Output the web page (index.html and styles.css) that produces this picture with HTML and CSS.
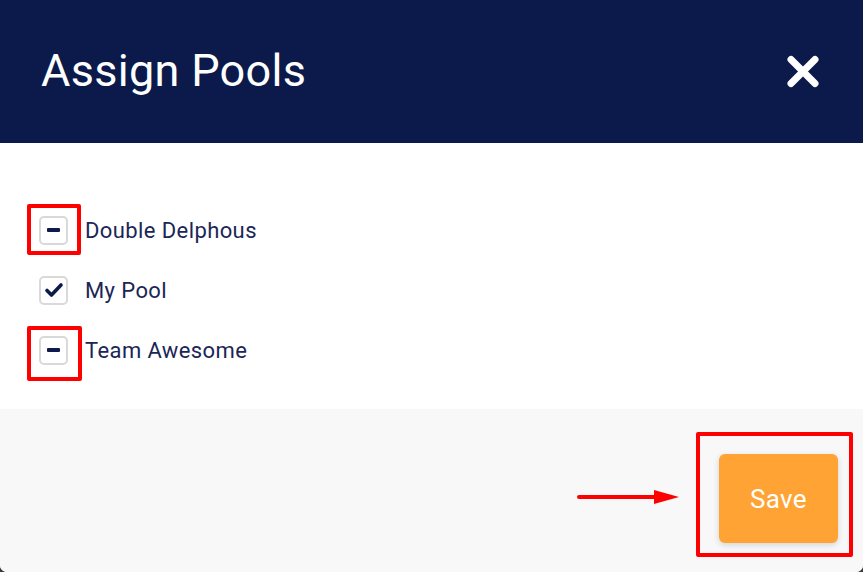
FILE: index.html
```html
<!DOCTYPE html>
<html>
<head>
<meta charset="utf-8">
<link rel="stylesheet" href="styles.css">
</head>
<body>
<div class="modal">
  <header class="modal-header">
    <h1 class="title">Assign Pools</h1>
    <button class="close" aria-label="Close">
      <svg width="34" height="33" viewBox="0 0 34 33"><path d="M5 4.5 L29 28.5 M29 4.5 L5 28.5" stroke="#fff" stroke-width="7" stroke-linecap="round" fill="none"/></svg>
    </button>
  </header>
  <div class="modal-body">
    <label class="row">
      <span class="box">
        <span class="dash"></span>
        <span class="mark mark-a"></span>
      </span>
      <span class="label">Double Delphous</span>
    </label>
    <label class="row">
      <span class="box">
        <svg width="20" height="16" viewBox="0 0 20 16"><path d="M3 8.5 L7.5 13 L17 3" stroke="#0d1b4c" stroke-width="3.6" fill="none" stroke-linecap="round" stroke-linejoin="round"/></svg>
      </span>
      <span class="label">My Pool</span>
    </label>
    <label class="row">
      <span class="box">
        <span class="dash"></span>
        <span class="mark mark-b"></span>
      </span>
      <span class="label">Team Awesome</span>
    </label>
  </div>
  <footer class="modal-footer">
    <div class="save-wrap">
      <svg class="arrow" width="106" height="18" viewBox="0 0 106 18"><path d="M3 9 L80 9" stroke="#ff0000" stroke-width="4" stroke-linecap="round"/><path d="M78 2 L103 9 L78 16 Z" fill="#ff0000"/></svg>
      <span class="mark mark-save"></span>
      <button class="save">Save</button>
    </div>
  </footer>
</div>
</body>
</html>
```
FILE: styles.css
```css
* { box-sizing: border-box; }
html, body { margin: 0; padding: 0; }
body {
  background: #3a3a3a;
  font-family: Roboto, "Liberation Sans", sans-serif;
}
.modal {
  width: 863px;
  height: 572px;
  display: flex;
  flex-direction: column;
  border-radius: 0 0 7px 7px;
  overflow: hidden;
  background: #fff;
}
.modal-header {
  height: 143px;
  flex: none;
  background: #0b1a4b;
  display: flex;
  align-items: center;
  justify-content: space-between;
  padding: 0 43px 0 41px;
}
.title {
  margin: 0;
  color: #fff;
  font-weight: 400;
  font-size: 45px;
  letter-spacing: 0.3px;
  line-height: 1;
  padding-bottom: 2px;
}
.close {
  border: 0;
  background: none;
  padding: 0;
  display: flex;
  cursor: pointer;
}
.modal-body {
  flex: none;
  height: 266px;
  padding: 57px 0 0 39px;
  display: flex;
  flex-direction: column;
}
.row {
  height: 60px;
  display: flex;
  align-items: center;
}
.box {
  position: relative;
  width: 29px;
  height: 29px;
  border: 2px solid #d9d9d9;
  border-radius: 5px;
  display: flex;
  align-items: center;
  justify-content: center;
  margin-right: 17px;
  background: #fff;
}
.dash {
  width: 13px;
  height: 4px;
  background: #0d1b4c;
  border-radius: 1px;
}
.label {
  font-size: 22px;
  color: #1b2656;
  letter-spacing: 0.4px;
}
.mark {
  position: absolute;
  border: 4px solid #ff0000;
  border-radius: 2px;
}
.mark-a { left: -14px; top: -14px; width: 54px; height: 51px; }
.mark-b { left: -14px; top: -12px; width: 55px; height: 55px; }
.modal-footer {
  flex: 1;
  background: #f8f8f8;
  display: flex;
  justify-content: flex-end;
  padding: 45px 25px 0 0;
}
.save-wrap {
  position: relative;
  align-self: flex-start;
}
.arrow {
  position: absolute;
  left: -143px;
  top: 34px;
}
.mark-save {
  left: -23px;
  top: -22px;
  width: 157px;
  height: 125px;
}
.save {
  width: 119px;
  height: 89px;
  border: 0;
  border-radius: 6px;
  background: #ffa334;
  color: #fff;
  font-family: Roboto, "Liberation Sans", sans-serif;
  font-size: 26px;
  font-weight: 400;
  letter-spacing: 0.3px;
  box-shadow: 0 2px 6px rgba(0,0,0,0.15);
  display: block;
}
```
